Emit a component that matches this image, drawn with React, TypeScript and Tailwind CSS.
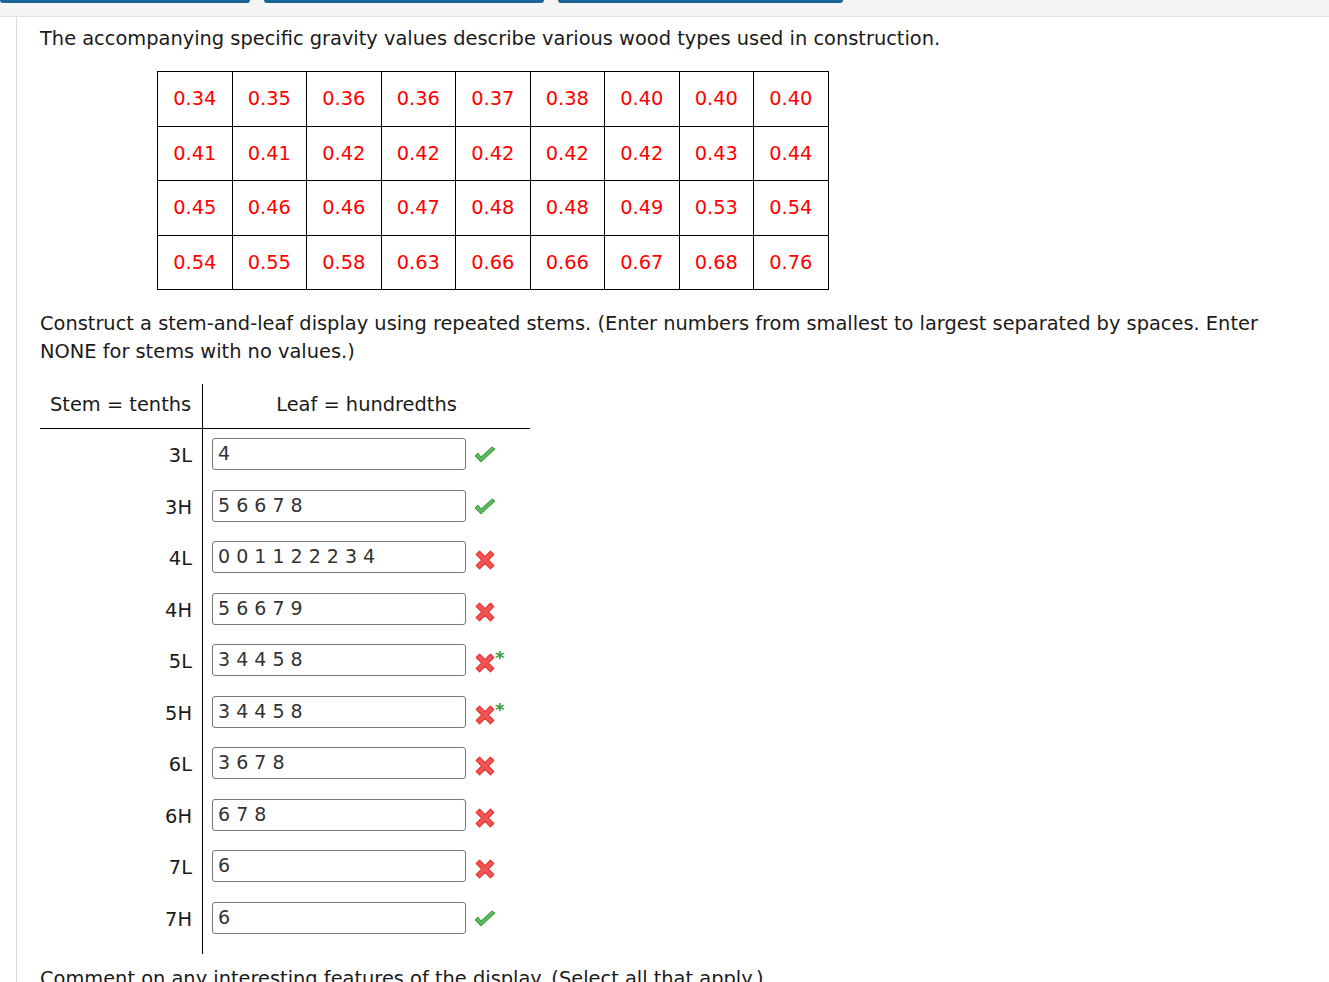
const data = [
  ["0.34", "0.35", "0.36", "0.36", "0.37", "0.38", "0.40", "0.40", "0.40"],
  ["0.41", "0.41", "0.42", "0.42", "0.42", "0.42", "0.42", "0.43", "0.44"],
  ["0.45", "0.46", "0.46", "0.47", "0.48", "0.48", "0.49", "0.53", "0.54"],
  ["0.54", "0.55", "0.58", "0.63", "0.66", "0.66", "0.67", "0.68", "0.76"],
];

type Mark = "ok" | "bad" | "star";

const stems: { stem: string; val: string; mark: Mark }[] = [
  { stem: "3L", val: "4", mark: "ok" },
  { stem: "3H", val: "5 6 6 7 8", mark: "ok" },
  { stem: "4L", val: "0 0 1 1 2 2 2 3 4", mark: "bad" },
  { stem: "4H", val: "5 6 6 7 9", mark: "bad" },
  { stem: "5L", val: "3 4 4 5 8", mark: "star" },
  { stem: "5H", val: "3 4 4 5 8", mark: "star" },
  { stem: "6L", val: "3 6 7 8", mark: "bad" },
  { stem: "6H", val: "6 7 8", mark: "bad" },
  { stem: "7L", val: "6", mark: "bad" },
  { stem: "7H", val: "6", mark: "ok" },
];

function Check() {
  return (
    <svg width="24" height="20" viewBox="0 0 24 20">
      <path d="M2 11 L8 17 L22 4 L19 2 L8 12 L5 8 Z" fill="#5cb85c" stroke="#3f9a3f" strokeWidth="1" strokeLinejoin="round" />
    </svg>
  );
}

function Cross() {
  return (
    <svg width="24" height="24" viewBox="0 0 22 22">
      <path d="M3 6 L6 3 L11 8 L16 3 L19 6 L14 11 L19 16 L16 19 L11 14 L6 19 L3 16 L8 11 Z" fill="#f25555" stroke="#e83a3a" strokeWidth="1.2" strokeLinejoin="round" />
    </svg>
  );
}

export default function App() {
  return (
    <div className="min-h-[982px] bg-white text-[#1a1a1a]" style={{ fontFamily: '"DejaVu Sans", Verdana, sans-serif' }}>
      <div className="h-[17px] bg-[#f5f5f5] border-b border-[#e2e2e2] flex gap-[14px]">
        <div className="w-[250px] h-[3px] bg-[#1a6496] rounded-b" />
        <div className="w-[280px] h-[3px] bg-[#1a6496] rounded-b" />
        <div className="w-[285px] h-[3px] bg-[#1a6496] rounded-b" />
      </div>
      <div className="ml-[16px] border-l border-[#dcdcdc] pl-[23px] pt-[10px] h-[965px] overflow-hidden">
        <p className="text-[19.4px] leading-[24px]">The accompanying specific gravity values describe various wood types used in construction.</p>
        <table className="ml-[117px] mt-[20px] border-collapse border border-black">
          <tbody>
            {data.map((row, i) => (
              <tr key={i} className="h-[54.5px]">
                {row.map((v, j) => (
                  <td key={j} className="w-[74.5px] border border-black text-center text-[#ff0000] text-[19.4px]">{v}</td>
                ))}
              </tr>
            ))}
          </tbody>
        </table>
        <p className="mt-[20px] text-[19.4px] leading-[28px] pr-[40px]">
          Construct a stem-and-leaf display using repeated stems. (Enter numbers from smallest to largest separated by spaces. Enter NONE for stems with no values.)
        </p>
        <div className="mt-[18px] w-[490px]">
          <div className="flex border-b border-black h-[45px] items-end text-[19.4px]">
            <div className="w-[163px] border-r border-black h-full flex items-end pb-[9px] pl-[10px]">Stem = tenths</div>
            <div className="flex-1 text-center pb-[9px]">Leaf = hundredths</div>
          </div>
          <div className="flex">
            <div className="w-[163px] border-r border-black pb-[10px]">
              {stems.map((s) => (
                <div key={s.stem} className="h-[51.5px] flex items-center justify-end pr-[10px] text-[19.4px] pt-[2px]">{s.stem}</div>
              ))}
            </div>
            <div className="pl-[9px] pt-[9px]">
              {stems.map((s) => (
                <div key={s.stem} className="h-[51.5px] flex items-start gap-[7px]">
                  <div className="w-[254px] h-[32px] border border-[#777] rounded-[3px] px-[5px] text-[19px] leading-[29px] text-[#333]">{s.val}</div>
                  <div className="flex items-start pt-[7px]">
                    {s.mark === "ok" ? <Check /> : <Cross />}
                    {s.mark === "star" && <span className="text-[#3a9a3a] font-bold text-[18px] leading-[14px] -ml-[2px]">*</span>}
                  </div>
                </div>
              ))}
            </div>
          </div>
        </div>
        <p className="mt-[10px] text-[19.4px]">Comment on any interesting features of the display. (Select all that apply.)</p>
      </div>
    </div>
  );
}
